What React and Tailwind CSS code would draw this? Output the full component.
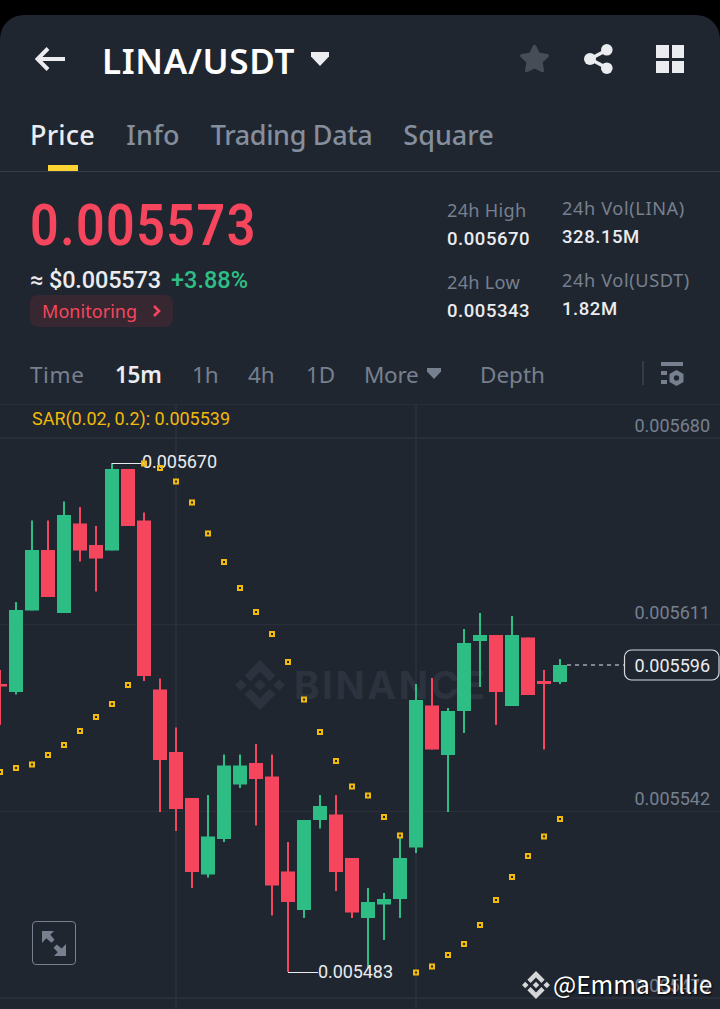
import { FaStar } from 'react-icons/fa'

const tabs = [
  { name: 'Price', className: 'w-[65px] tracking-[0.2px] text-[#eaecef]' },
  { name: 'Info', className: 'w-[54px] tracking-[0.2px] text-[#848e9c]' },
  { name: 'Trading Data', className: 'w-[161px] tracking-[-0.35px] text-[#848e9c]' },
  { name: 'Square', className: 'w-[91px] text-[#848e9c]' }
]

const stats = [
  [
    { label: '24h High', value: '0.005670' },
    { label: '24h Low', value: '0.005343' }
  ],
  [
    { label: '24h Vol(LINA)', value: '328.15M' },
    { label: '24h Vol(USDT)', value: '1.82M' }
  ]
]

// [center x, high, body top, body bottom, low, is rising]
const candles = [
  [0, 670, 684, 686.5, 725, false],
  [16, 602, 610, 692, 694.5, true],
  [32, 520.5, 550, 610.5, 610.5, true],
  [48, 520.5, 550, 597, 597, false],
  [64, 501.5, 515, 613, 613, true],
  [80, 507, 523.5, 550.5, 561.5, false],
  [96, 526, 545, 558.5, 591.5, false],
  [112, 463, 469, 550.5, 550.5, true],
  [128, 469, 469, 526, 526, false],
  [144, 512.5, 520.5, 676, 681, false],
  [160, 678.5, 689.5, 760, 812, false],
  [176, 727.5, 752, 809, 831, false],
  [192, 798, 798, 872, 888, false],
  [208, 795, 836.5, 874.5, 877.5, true],
  [224, 754.5, 765.5, 839, 842, true],
  [240, 754.5, 765.5, 784.5, 788, true],
  [256, 744, 763, 779, 825.5, false],
  [272, 754.5, 776.5, 885.5, 915.5, false],
  [288, 842, 871.5, 902, 972, false],
  [304, 820, 820, 910, 918, true],
  [320, 795, 806, 820, 828.5, true],
  [336, 795, 814.5, 872, 891, false],
  [352, 858, 858, 912.5, 918, false],
  [368, 888, 902, 918, 968, true],
  [384, 893, 899, 904.5, 940, true],
  [400, 838, 858, 899, 918, true],
  [416, 684, 700, 847.5, 853, true],
  [432, 678, 705.5, 749.5, 749.5, false],
  [448, 708, 711, 755, 812, true],
  [464, 629, 643, 711, 733, true],
  [480, 613, 635, 641, 687, true],
  [496, 635, 635, 692, 725, false],
  [512, 616, 635, 706, 706, true],
  [528, 637.5, 637.5, 695, 695, false],
  [544, 670, 681, 684, 749.5, false],
  [560, 659, 665, 682, 684, true]
]

// one SAR mark every 16px
const sar = [
  772, 768, 764.5, 755, 745, 731, 717, 704, 685, 463.5, 468, 481.5,
  502.5, 533.5, 562, 588, 612, 634, 662, 699.5, 732, 761, 786.5, 795.5,
  817, 835.5, 972.5, 966.5, 955, 944, 925, 900, 877, 856, 836.5, 819
]

const BinanceMark = () => (
  <>
    <path d="M12 0 4.6 7.4l2.8 2.8L12 5.6l4.6 4.6 2.8-2.8z" />
    <path d="M12 24l-7.4-7.4 2.8-2.8 4.6 4.6 4.6-4.6 2.8 2.8z" />
    <path d="M2.8 9.2 5.6 12l-2.8 2.8L0 12zM12 9.2l2.8 2.8-2.8 2.8L9.2 12zM21.2 9.2 24 12l-2.8 2.8-2.8-2.8z" />
  </>
)

const Header = () => (
  <header className="flex h-[88px] items-center pl-[35px] pr-9">
    <svg className="h-6 w-[30px]" viewBox="0 0 30 24" fill="none" stroke="#eaecef" strokeWidth="4">
      <path d="M13 1.5 2.5 12 13 22.5M2.5 12H30" />
    </svg>
    <h1 className="ml-[37px] w-[193px] whitespace-nowrap pt-0.5 font-['Noto_Sans'] text-[35px] font-semibold leading-none tracking-[0.65px] text-white">
      LINA/USDT
    </h1>
    <svg className="ml-4 h-3.5 w-[18px]" viewBox="0 0 18 14" fill="#eaecef">
      <path d="M0 0h18v4.5L9 14 0 4.5z" />
    </svg>
    <div className="ml-auto flex items-center">
      <FaStar className="mb-0.5 h-[31px] w-[31px] text-[#474d57]" />
      <svg className="ml-[34px] h-[30px] w-[30px]" viewBox="0 0 30 30" fill="#eaecef">
        <path d="M6 15 23 6M6 15l17 9" stroke="#eaecef" strokeWidth="3.6" />
        <circle cx="6" cy="15" r="6" />
        <circle cx="22.8" cy="5.8" r="5.8" />
        <circle cx="22.8" cy="24.2" r="5.8" />
      </svg>
      <div className="ml-[42px] grid grid-cols-2 gap-[3px]">
        {[0, 1, 2, 3].map((i) => (
          <span key={i} className="h-[12.4px] w-[12.4px] bg-[#eaecef]"></span>
        ))}
      </div>
    </div>
  </header>
)

const Tabs = () => (
  <nav className="flex h-[69px] gap-[31px] border-b border-[#363d48] pl-[30px] font-['Noto_Sans'] text-[27px] font-medium">
    {tabs.map((tab, i) => (
      <div key={tab.name} className={`flex flex-col items-center whitespace-nowrap ${tab.className}`}>
        <span className="mt-3.5 h-[48px] leading-[36px]">{tab.name}</span>
        {i === 0 && <span className="h-1.5 w-[30px] bg-[#fcd535]"></span>}
      </div>
    ))}
  </nav>
)

const Summary = () => (
  <section className="flex h-[174px] pl-[30px] font-['Roboto']">
    <div className="w-[417px] pt-[26px]">
      <div className="origin-left scale-x-[0.88] text-[57px] font-semibold leading-[56px] tracking-[1.7px] text-[#f6465d]">0.005573</div>
      <div className="mt-3 flex h-[29px] items-center gap-[10px] text-[23.5px] font-medium">
        <span className="tracking-[-0.15px] text-[#eaecef]">≈ $0.005573</span>
        <span className="text-[#2ebd85]">+3.88%</span>
      </div>
      <div className="flex h-8 w-[143px] items-center justify-between rounded-lg bg-[#372731] pl-3 pr-3 font-['Noto_Sans'] text-[18px] tracking-[0.05px] text-[#f6465d]">
        Monitoring
        <svg className="h-3 w-2" viewBox="0 0 8 12" fill="none" stroke="currentColor" strokeWidth="2.6">
          <path d="m1 1 5 5-5 5" />
        </svg>
      </div>
    </div>
    <div className="flex gap-[32px] pt-6 text-[18.5px]">
      {stats.map((column, i) => (
        <div key={i} className={i === 0 ? 'w-[83px] pt-0.5' : 'w-[130px]'}>
          {column.map((item) => (
            <div key={item.label} className="h-[72px] whitespace-nowrap">
              <div className={`h-[29px] font-['Noto_Sans'] text-[18.2px] leading-6 text-[#76808f] ${i === 0 ? 'tracking-[0.25px]' : 'tracking-[0.6px]'}`}>
                {item.label}
              </div>
              <div className="font-medium leading-6 tracking-[0.55px] text-[#eaecef]">{item.value}</div>
            </div>
          ))}
        </div>
      ))}
    </div>
  </section>
)

const Intervals = () => (
  <nav className="flex h-[58px] items-center whitespace-nowrap pl-[30px] pr-9 font-['Noto_Sans'] text-[22.5px] text-[#76808f]">
    <span className="w-[85px] tracking-[0.6px]">Time</span>
    <span className="w-[77px] font-semibold tracking-[-0.3px] text-[#eaecef]">15m</span>
    <span className="w-[56px]">1h</span>
    <span className="w-[58px]">4h</span>
    <span className="w-[58px]">1D</span>
    <span className="w-[63px] tracking-[-0.3px]">More</span>
    <svg className="mb-1 mr-[39px] h-[11px] w-3.5" viewBox="0 0 14 11" fill="currentColor">
      <path d="M0 0h14v3.5L7 11 0 3.5z" />
    </svg>
    <span>Depth</span>
    <span className="mb-1 ml-auto h-6 w-0.5 bg-[#343b46]"></span>
    <svg className="mb-[3px] ml-4 h-[25px] w-6" viewBox="0 0 24 25" fill="currentColor">
      <path d="M1 1h22v4H1zM1 10h6v4H1zM1 19h6v4H1z" />
      <path fillRule="evenodd" d="m16.5 9 7 4v8l-7 4-7-4v-8zm0 5.3a2.7 2.7 0 1 0 0 5.4 2.7 2.7 0 0 0 0-5.4z" />
    </svg>
  </nav>
)

const Chart = () => (
  <section className="relative h-[605px]">
    <svg className="block h-[605px] w-[720px] font-['Roboto'] text-[18px]" viewBox="0 404 720 605">
      <g fill="#292f3a">
        <path d="M0 403h720v2H0zM0 437h720v2H0zM0 624h720v1.3H0zM0 810.7h720v1.3H0zM0 997h720v2H0z" />
        <path d="M175 404h2v605h-2zM415 404h2v605h-2z" />
      </g>
      <g fill="#2d333e">
        <svg x="235" y="660" width="50" height="50" viewBox="0 0 24 24"><BinanceMark /></svg>
        <text x="294" y="699" textLength="191" className="font-['Inter'] text-[38.5px] font-bold">BINANCE</text>
      </g>
      {candles.map(([x, high, top, bottom, low, rising]) => (
        <g key={x} fill={rising ? '#2ebd85' : '#f6465d'}>
          <rect x={x - 1} y={high} width="2" height={low - high} />
          <rect x={x - 7} y={top} width="14" height={bottom - top} />
        </g>
      ))}
      <path d="M112 463.5h31M288 972.5h30" stroke="#eaecef" strokeWidth="1.2" fill="none" />
      <g fill="#eaecef">
        <text x="142" y="468" textLength="75">0.005670</text>
        <text x="318" y="978" textLength="75">0.005483</text>
      </g>
      <g fill="none" stroke="#f0b90b" strokeWidth="2">
        {sar.map((y, i) => (
          <rect key={i} x={i * 16 - 2} y={y - 2} width="4" height="4" />
        ))}
      </g>
      <text x="32" y="425" textLength="198" fill="#f0b90b">SAR(0.02, 0.2): 0.005539</text>
      <g fill="#76808f">
        <text x="634.5" y="432" textLength="75.5">0.005680</text>
        <text x="634.5" y="619" textLength="75.5">0.005611</text>
        <text x="634.5" y="805" textLength="75.5">0.005542</text>
        <text x="634.5" y="992" textLength="75.5">0.005473</text>
      </g>
      <path d="M567 665h57" stroke="#a0a5ae" strokeWidth="1.5" strokeDasharray="4 4" />
      <rect x="624.5" y="650" width="94.5" height="30" rx="7" fill="#202630" stroke="#d5d8dd" strokeWidth="1.2" />
      <text x="634.5" y="672" textLength="75.5" fill="#eaecef">0.005596</text>
    </svg>
    <button className="absolute left-8 top-[517px] flex h-11 w-11 items-center justify-center rounded border border-[#76808f]">
      <svg className="h-[25px] w-6" viewBox="0 0 24 25" fill="#76808f">
        <path d="M0 0h12L8.3 3.7l4.2 5-3 3-5.2-4.4L0 12zM24 25H12l3.7-3.7-4.2-4.6 3.2-3.2 5 4L24 13z" />
      </svg>
    </button>
    <div className="absolute left-[522px] top-[566px] flex h-[30px] items-center whitespace-nowrap font-['Noto_Sans_CJK_SC',sans-serif] text-[24.5px] text-white [text-shadow:1px_1px_2px_#000]">
      <svg className="mr-[3px] h-7 w-7" viewBox="0 0 24 24" fill="#d5d6d8"><BinanceMark /></svg>
      <span className="mb-0.5">@Emma Billie</span>
    </div>
  </section>
)

const App = () => {
  return (
    <div className="h-[1009px] w-[720px] overflow-hidden bg-black pt-[15px]">
      <main className="rounded-t-[24px] bg-[#202630]">
        <Header />
        <Tabs />
        <Summary />
        <Intervals />
        <Chart />
      </main>
    </div>
  )
}

export default App
